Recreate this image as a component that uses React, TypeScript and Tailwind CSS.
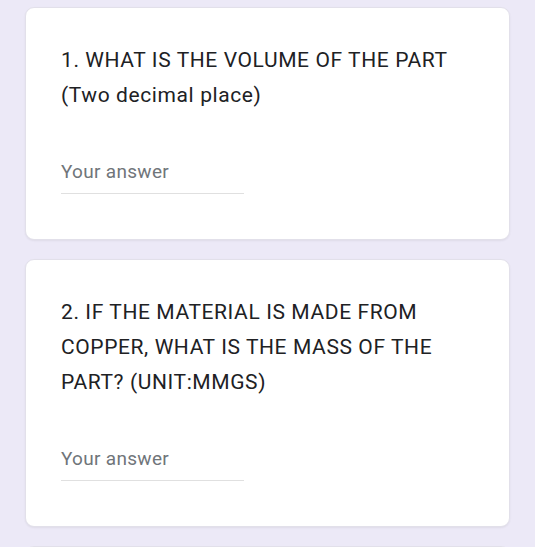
const questions = [
  { id: 1, title: '1. WHAT IS THE VOLUME OF THE PART (Two decimal place)' },
  { id: 2, title: '2. IF THE MATERIAL IS MADE FROM COPPER, WHAT IS THE MASS OF THE PART? (UNIT:MMGS)' },
]

function QuestionCard({ title }: { title: string }) {
  return (
    <div className="bg-white rounded-[9px] border border-[#e2e0ea] shadow-[0_1px_2px_rgba(60,64,67,0.08)] px-[35px] pt-[35px] pb-[45px]">
      <div className="text-[21px] leading-[35px] tracking-[0.6px] text-[#202124] font-['Roboto',sans-serif]">{title}</div>
      <div className="mt-[47px] w-[183px] border-b border-[#e0e0e0] pb-[9px]">
        <span className="block text-[19px] leading-[24px] tracking-[0.3px] text-[#70757a] font-['Roboto',sans-serif]">Your answer</span>
      </div>
    </div>
  )
}

export default function App() {
  return (
    <div className="min-h-screen bg-[#ece9f7] px-[25px] pt-[7px] flex flex-col gap-[19px]">
      {questions.map((q) => (
        <QuestionCard key={q.id} title={q.title} />
      ))}
      {/* next question, below the fold */}
      <div className="h-[160px] bg-white rounded-[9px] border border-[#e2e0ea]" />
    </div>
  )
}
